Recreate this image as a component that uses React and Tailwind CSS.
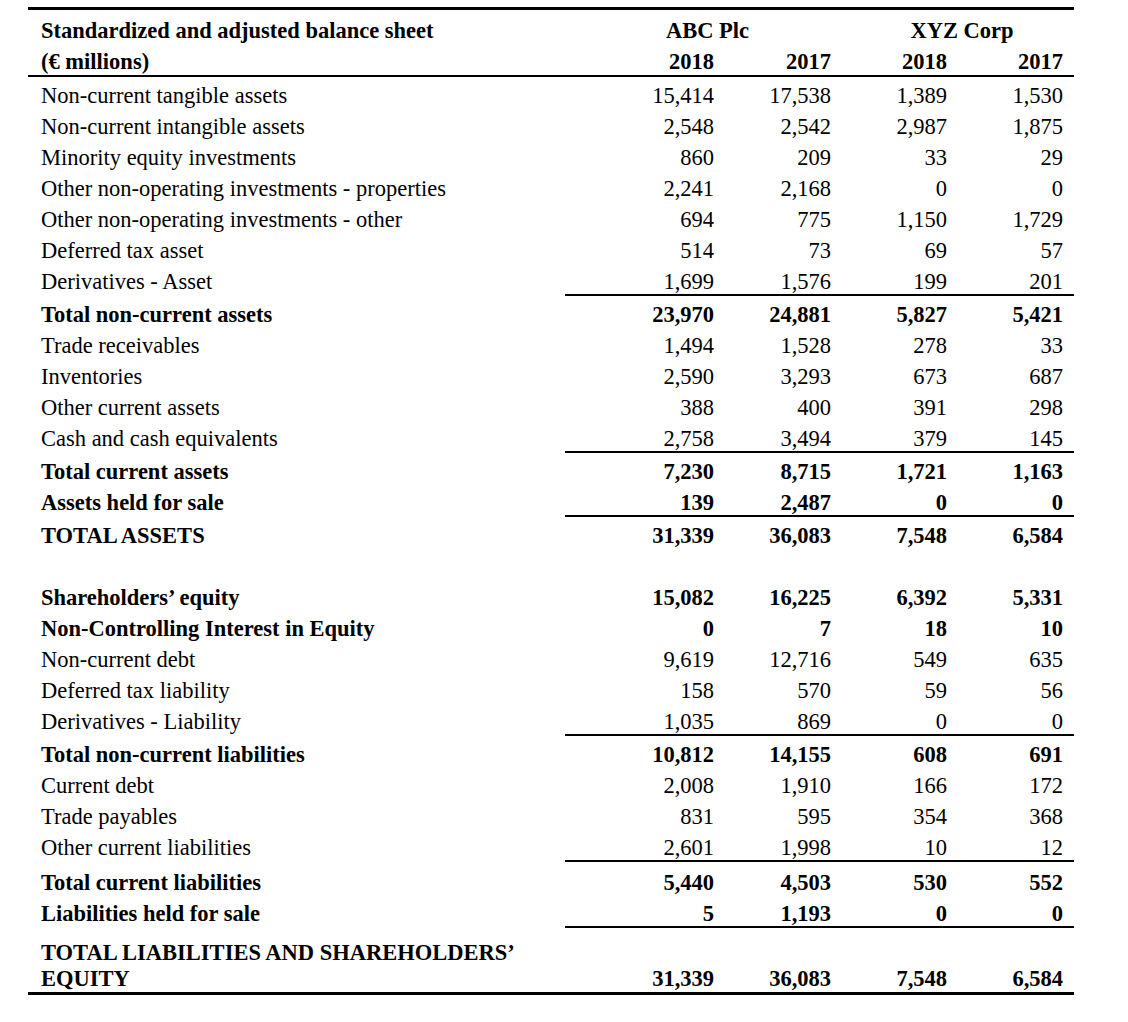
import React from "react";

const COLS = "grid grid-cols-[537px_160px_117px_116px_116px]";

const assets = [
  { label: "Non-current tangible assets", vals: ["15,414", "17,538", "1,389", "1,530"] },
  { label: "Non-current intangible assets", vals: ["2,548", "2,542", "2,987", "1,875"] },
  { label: "Minority equity investments", vals: ["860", "209", "33", "29"] },
  { label: "Other non-operating investments - properties", vals: ["2,241", "2,168", "0", "0"] },
  { label: "Other non-operating investments - other", vals: ["694", "775", "1,150", "1,729"] },
  { label: "Deferred tax asset", vals: ["514", "73", "69", "57"] },
  { label: "Derivatives - Asset", vals: ["1,699", "1,576", "199", "201"], line: true },
  { label: "Total non-current assets", vals: ["23,970", "24,881", "5,827", "5,421"], bold: true },
  { label: "Trade receivables", vals: ["1,494", "1,528", "278", "33"] },
  { label: "Inventories", vals: ["2,590", "3,293", "673", "687"] },
  { label: "Other current assets", vals: ["388", "400", "391", "298"] },
  { label: "Cash and cash equivalents", vals: ["2,758", "3,494", "379", "145"], line: true },
  { label: "Total current assets", vals: ["7,230", "8,715", "1,721", "1,163"], bold: true },
  { label: "Assets held for sale", vals: ["139", "2,487", "0", "0"], bold: true, line: true },
  { label: "TOTAL ASSETS", vals: ["31,339", "36,083", "7,548", "6,584"], bold: true },
];

const liabilities = [
  { label: "Shareholders’ equity", vals: ["15,082", "16,225", "6,392", "5,331"], bold: true },
  { label: "Non-Controlling Interest in Equity", vals: ["0", "7", "18", "10"], bold: true },
  { label: "Non-current debt", vals: ["9,619", "12,716", "549", "635"] },
  { label: "Deferred tax liability", vals: ["158", "570", "59", "56"] },
  { label: "Derivatives - Liability", vals: ["1,035", "869", "0", "0"], line: true },
  { label: "Total non-current liabilities", vals: ["10,812", "14,155", "608", "691"], bold: true },
  { label: "Current debt", vals: ["2,008", "1,910", "166", "172"] },
  { label: "Trade payables", vals: ["831", "595", "354", "368"] },
  { label: "Other current liabilities", vals: ["2,601", "1,998", "10", "12"], line: true, gap: true },
  { label: "Total current liabilities", vals: ["5,440", "4,503", "530", "552"], bold: true },
  { label: "Liabilities held for sale", vals: ["5", "1,193", "0", "0"], bold: true, line: true },
];

function Row({ label, vals, bold, line, gap }) {
  return (
    <div
      className={`${COLS} ${gap ? "mb-[5px]" : line ? "mb-[3px]" : ""} ${bold ? "font-bold" : ""}`}
    >
      <div className={`pl-[13px] whitespace-nowrap ${line ? "leading-[25px] pt-[3px]" : "leading-[31px]"}`}>
        {label}
      </div>
      {vals.map((v, i) => (
        <div
          key={i}
          className={`text-right pr-[11px] ${
            line ? "leading-[25px] pt-[3px] border-b-2 border-black" : "leading-[31px]"
          }`}
        >
          {v}
        </div>
      ))}
    </div>
  );
}

export default function App() {
  return (
    <div className="min-h-screen bg-white text-black pl-[28px] pt-[7px] font-[family-name:'Liberation_Serif','Times_New_Roman',serif] text-[22.5px]">
      <div className="w-[1046px]">
        {/* HEADER */}
        <div className="border-t-[3px] border-black pt-[5px] font-bold">
          <div className={COLS}>
            <div className="pl-[13px] leading-[31px]">Standardized and adjusted balance sheet</div>
            <div className="col-span-2 text-center pl-[8px] leading-[31px]">ABC Plc</div>
            <div className="col-span-2 text-center pl-[8px] leading-[31px]">XYZ Corp</div>
          </div>
          <div className={`${COLS} border-b-2 border-black`}>
            <div className="pl-[13px] leading-[26px] pt-[3px]">(€ millions)</div>
            {["2018", "2017", "2018", "2017"].map((y, i) => (
              <div key={i} className="text-right pr-[11px] leading-[26px] pt-[3px]">
                {y}
              </div>
            ))}
          </div>
        </div>

        {/* ASSETS */}
        <div className="pt-[3px]">
          {assets.map((r) => (
            <Row key={r.label} {...r} />
          ))}
        </div>

        <div className="h-[31px]" />

        {/* LIABILITIES & EQUITY */}
        <div>
          {liabilities.map((r) => (
            <Row key={r.label} {...r} />
          ))}
        </div>

        {/* GRAND TOTAL */}
        <div className={`${COLS} items-end mt-[12px] border-b-[3px] border-black font-bold leading-[26px]`}>
          <div className="pl-[13px]">
            TOTAL LIABILITIES AND SHAREHOLDERS’
            <br />
            EQUITY
          </div>
          {["31,339", "36,083", "7,548", "6,584"].map((v, i) => (
            <div key={i} className="text-right pr-[11px]">
              {v}
            </div>
          ))}
        </div>
      </div>
    </div>
  );
}
